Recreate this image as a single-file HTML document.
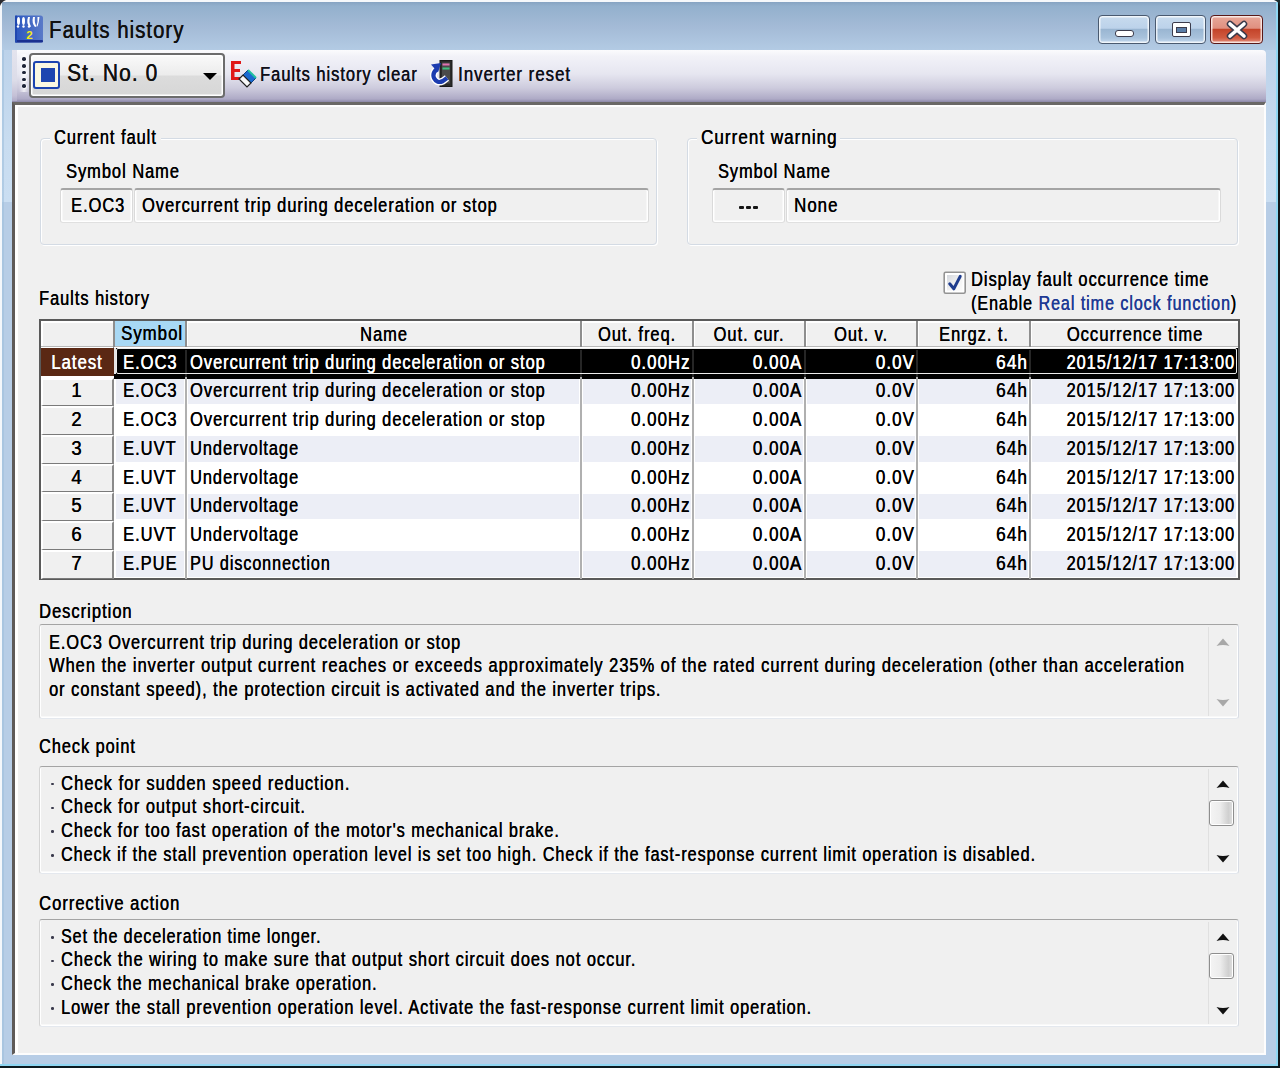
<!DOCTYPE html>
<html><head><meta charset="utf-8"><title>Faults history</title>
<style>
html,body{margin:0;padding:0;}
body{width:1280px;height:1068px;position:relative;overflow:hidden;font-family:"Liberation Sans",sans-serif;background:#b7cde6;}
.r{position:absolute;}
.t{position:absolute;white-space:pre;font-family:"Liberation Sans",sans-serif;-webkit-text-stroke:0.15px currentColor;text-shadow:0.3px 0 0 currentColor;}
</style></head><body>
<div class="r" style="left:0px;top:0px;width:1280px;height:1068px;background:#b7cde6;"></div>
<div class="r" style="left:0px;top:0px;width:1280px;height:2px;background:#f6f8fb;"></div>
<div class="r" style="left:0px;top:2px;width:1280px;height:48px;background:linear-gradient(#86a3c2 0px,#93b0cd 4px,#a3bad6 24px,#b3cbe4 48px);"></div>
<div class="r" style="left:0px;top:0px;width:2px;height:1068px;background:#f4f7fb;"></div>
<div class="r" style="left:2px;top:50px;width:10px;height:152px;background:linear-gradient(#bcd2ea,#c8dcf0 60%,#cadef2);"></div>
<div class="r" style="left:1266px;top:50px;width:10px;height:152px;background:linear-gradient(#bcd2ea,#c8dcf0 60%,#cadef2);"></div>
<div class="r" style="left:2px;top:50px;width:2px;height:1014px;background:rgba(160,192,220,0.6);"></div>
<div class="r" style="left:1276px;top:2px;width:2px;height:1063px;background:#8fd6f2;"></div>
<div class="r" style="left:1278px;top:0px;width:2px;height:1068px;background:#101418;"></div>
<div class="r" style="left:0px;top:1064px;width:1278px;height:1.7px;background:#8fd6f2;"></div>
<div class="r" style="left:0px;top:1065.7px;width:1280px;height:2.3px;background:#0c1a20;"></div>
<svg class="r" style="left:0;top:0" width="7" height="7"><path d="M0 0 H6 Q1.5 1.5 0 6 Z" fill="#2a2a2e"/></svg>
<svg class="r" style="left:1273px;top:0" width="7" height="7"><path d="M7 0 H1 Q5.5 1.5 7 6 Z" fill="#1a2a2e"/></svg>
<svg class="r" style="left:14px;top:14px" width="30" height="30" viewBox="0 0 30 30">
<defs><linearGradient id="ig" x1="0" y1="0" x2="1" y2="0"><stop offset="0" stop-color="#2a56c0"/><stop offset="1" stop-color="#5a7ac8"/></linearGradient></defs>
<rect x="1" y="1.5" width="28" height="27" rx="2.5" fill="url(#ig)"/>
<rect x="1" y="26" width="28" height="2.5" rx="1" fill="#1a3090"/>
<rect x="1" y="1.5" width="2" height="27" fill="#2048b0"/>
<g fill="#fff">
<ellipse cx="4.5" cy="7" rx="1.5" ry="4"/><circle cx="4" cy="12.5" r="1.2"/>
<ellipse cx="9.5" cy="7" rx="1.5" ry="4"/><circle cx="9.5" cy="12.5" r="1.2"/>
<circle cx="15" cy="12.5" r="1.2"/>
<path d="M14 3 Q12 9 15.5 13 L17 12.5 Q14.5 8 16 3 Z"/>
<path d="M19 3 Q17.5 9 21 13 L22.5 12.5 Q20 8 21 3 Z"/>
<path d="M23.5 3 L25.5 3 Q25 9 23.5 12.5 L22.5 12 Q24 8 23.5 3 Z"/>
</g>
<text x="15.5" y="25" font-family="Liberation Sans" font-weight="bold" font-size="11.5" fill="#f4e818" text-anchor="middle">2</text>
</svg>
<div class="t" style="left:48.80px;top:17.62px;font-size:23.004px;line-height:24px;color:#101010;letter-spacing:1.2px;transform:scaleX(0.8813);transform-origin:left;">Faults history</div>
<div class="r" style="left:1098px;top:15px;width:52px;height:29px;box-sizing:border-box;border:1.5px solid #4a5a70;border-radius:4px;background:linear-gradient(#c8dbee 0%,#bcd2ea 45%,#9ab6d2 50%,#a8c2dc 80%,#c4d8ee 100%);box-shadow:inset 0 0 0 1.5px rgba(255,255,255,0.75);"></div>
<div class="r" style="left:1155px;top:15px;width:51px;height:29px;box-sizing:border-box;border:1.5px solid #4a5a70;border-radius:4px;background:linear-gradient(#c8dbee 0%,#bcd2ea 45%,#9ab6d2 50%,#a8c2dc 80%,#c4d8ee 100%);box-shadow:inset 0 0 0 1.5px rgba(255,255,255,0.75);"></div>
<div class="r" style="left:1210px;top:15px;width:53px;height:29px;box-sizing:border-box;border:1.5px solid #5a1818;border-radius:4px;background:linear-gradient(#e8a89a 0%,#e09080 45%,#c4442a 50%,#d05a40 80%,#e49080 100%);box-shadow:inset 0 0 0 1.5px rgba(255,255,255,0.75);"></div>
<div class="r" style="left:1115px;top:29.5px;width:19px;height:7.5px;box-sizing:border-box;border:1.5px solid #3c3c4c;border-radius:3px;background:#fff;"></div>
<div class="r" style="left:1171.5px;top:22px;width:19px;height:15px;box-sizing:border-box;border:1.5px solid #3c3c4c;border-radius:2px;background:#fff;"></div>
<div class="r" style="left:1175.5px;top:26.5px;width:11px;height:6px;box-sizing:border-box;border:1.5px solid #3c3c4c;background:#5a7ea8;"></div>
<svg class="r" style="left:1225px;top:20px" width="24" height="20" viewBox="0 0 24 20">
<path d="M5 4 L19 16 M19 4 L5 16" stroke="#3a3a4a" stroke-width="6.5" stroke-linecap="round"/>
<path d="M5 4 L19 16 M19 4 L5 16" stroke="#fff" stroke-width="3.6" stroke-linecap="round"/>
</svg>
<div class="r" style="left:12px;top:49.6px;width:1254px;height:52.4px;background:linear-gradient(#fbfbfd 0px,#f2f2f8 6px,#e6e6f0 24px,#cdcbdd 38px,#aeaac6 49px,#8c88a8 52px);border-top-right-radius:4px;"></div>
<div class="r" style="left:12px;top:50px;width:5px;height:51px;background:linear-gradient(#e4e4ee,#dcdce8 60%,#c4c0d6 90%,#b0acc8);"></div>
<div class="r" style="left:19px;top:54px;width:10px;height:38px;background:linear-gradient(90deg,rgba(255,255,255,0) 0%,rgba(255,255,255,0.7) 50%,rgba(255,255,255,0) 100%);"></div>
<div class="r" style="left:22px;top:57.4px;width:3.6px;height:3.6px;background:#1e2438;border-radius:50%;box-shadow:0.8px 0.8px 0 #fff;"></div>
<div class="r" style="left:22px;top:64.1px;width:3.6px;height:3.6px;background:#1e2438;border-radius:50%;box-shadow:0.8px 0.8px 0 #fff;"></div>
<div class="r" style="left:22px;top:70.8px;width:3.6px;height:3.6px;background:#1e2438;border-radius:50%;box-shadow:0.8px 0.8px 0 #fff;"></div>
<div class="r" style="left:22px;top:77.5px;width:3.6px;height:3.6px;background:#1e2438;border-radius:50%;box-shadow:0.8px 0.8px 0 #fff;"></div>
<div class="r" style="left:22px;top:84.2px;width:3.6px;height:3.6px;background:#1e2438;border-radius:50%;box-shadow:0.8px 0.8px 0 #fff;"></div>
<div class="r" style="left:29px;top:52.5px;width:196px;height:45px;box-sizing:border-box;border:2px solid #6c6c6c;border-radius:4px;background:linear-gradient(#fafafa 0%,#ececec 48%,#dcdcdc 52%,#d6d6d6 100%);box-shadow:inset 0 0 0 1.5px #fff;"></div>
<div class="r" style="left:33px;top:60.5px;width:27px;height:28px;box-sizing:border-box;border:2px solid #1c44b0;border-radius:3px;background:#fbf8e2;"></div>
<div class="r" style="left:40.5px;top:67.5px;width:14px;height:14px;background:#1e46b0;"></div>
<div class="t" style="left:66.80px;top:61.11px;font-size:23.328px;line-height:24px;color:#101010;letter-spacing:1.2px;transform:scaleX(0.9000);transform-origin:left;">St. No. 0</div>
<svg class="r" style="left:202px;top:72px" width="16" height="9"><path d="M1 1 L15 1 L8 8 Z" fill="#000"/></svg>
<svg class="r" style="left:229px;top:60px" width="30" height="28" viewBox="0 0 30 28">
<path d="M2 1 H12 V4 H5.5 V9 H11 V12 H5.5 V17 H12 V20 H2 Z" fill="#e01818"/>
<path d="M10 19 L19 10 L27 18 L18 27 Z" fill="#1a6ad0" stroke="#104080" stroke-width="1"/>
<path d="M10 19 L14 15 L22 23 L18 27 Z" fill="#f8f8f8" stroke="#202020" stroke-width="1.2"/>
<path d="M19 10 L27 18" stroke="#20c0a0" stroke-width="2"/>
</svg>
<div class="t" style="left:259.50px;top:61.87px;font-size:19.980px;line-height:24px;color:#10101a;letter-spacing:1.2px;transform:scaleX(0.8232);transform-origin:left;">Faults history clear</div>
<svg class="r" style="left:430px;top:60px" width="24" height="28" viewBox="0 0 24 28">
<rect x="10" y="0.5" width="12" height="26" fill="#2a2a2a" stroke="#1a1a1a"/>
<rect x="12" y="2.5" width="8" height="21" fill="#4a4a4a"/>
<rect x="12.5" y="3.5" width="7" height="2" fill="#e070b0"/>
<rect x="12.5" y="7.5" width="7" height="2" fill="#40c080"/>
<path d="M7 9 Q2 13 4 18 Q7 24 13 21 L17 18" stroke="#fff" stroke-width="7" fill="none"/>
<path d="M7 9 Q2 13 4 18 Q7 24 13 21 L17 18" stroke="#1c3cb0" stroke-width="4.2" fill="none"/>
<path d="M1 4.5 L11 3 L8 12.5 Z" fill="#1c3cb0"/>
</svg>
<div class="t" style="left:457.50px;top:62.27px;font-size:19.980px;line-height:24px;color:#10101a;letter-spacing:1.2px;transform:scaleX(0.8403);transform-origin:left;">Inverter reset</div>
<div class="r" style="left:12px;top:102px;width:1254px;height:953px;box-sizing:border-box;background:#f0f0f0;border-top:3px solid #6a6866;border-left:3px solid #5e5a58;border-right:2px solid #fdfdfd;border-bottom:2px solid #fdfdfd;"></div>
<div class="r" style="left:15px;top:105px;width:1249px;height:2px;background:#fff;"></div>
<div class="r" style="left:15px;top:105px;width:3px;height:948px;background:#fff;"></div>
<div class="r" style="left:40px;top:138px;width:617px;height:107px;box-sizing:border-box;border:1.5px solid #d4dbe4;border-radius:4px;box-shadow:1px 1px 0 #fff, inset 1px 1px 0 #fff;"></div>
<div class="r" style="left:50px;top:136px;width:111px;height:6px;background:#f0f0f0;"></div>
<div class="t" style="left:54.00px;top:125.07px;font-size:19.980px;line-height:24px;color:#000;letter-spacing:1.2px;transform:scaleX(0.8187);transform-origin:left;">Current fault</div>
<div class="t" style="left:65.50px;top:158.67px;font-size:19.980px;line-height:24px;color:#000;letter-spacing:1.2px;transform:scaleX(0.8214);transform-origin:left;">Symbol Name</div>
<div class="r" style="left:60px;top:188px;width:73px;height:35px;box-sizing:border-box;border-top:2px solid #a4a4a4;border-left:1px solid #dadada;border-right:1px solid #dadada;border-bottom:1px solid #e0e0e0;border-radius:3px;background:#f0f0f0;box-shadow:inset 1.5px 0 0 #fff, inset -1.5px 0 0 #fff, inset 0 -1.5px 0 #fff;"></div>
<div class="r" style="left:134px;top:188px;width:515px;height:35px;box-sizing:border-box;border-top:2px solid #a4a4a4;border-left:1px solid #dadada;border-right:1px solid #dadada;border-bottom:1px solid #e0e0e0;border-radius:3px;background:#f0f0f0;box-shadow:inset 1.5px 0 0 #fff, inset -1.5px 0 0 #fff, inset 0 -1.5px 0 #fff;"></div>
<div class="t" style="left:70.50px;top:193.07px;font-size:19.980px;line-height:24px;color:#000;letter-spacing:1.2px;transform:scaleX(0.8213);transform-origin:left;">E.OC3</div>
<div class="t" style="left:141.80px;top:193.07px;font-size:19.980px;line-height:24px;color:#000;letter-spacing:1.2px;transform:scaleX(0.8203);transform-origin:left;">Overcurrent trip during deceleration or stop</div>
<div class="r" style="left:687px;top:138px;width:551px;height:107px;box-sizing:border-box;border:1.5px solid #d4dbe4;border-radius:4px;box-shadow:1px 1px 0 #fff, inset 1px 1px 0 #fff;"></div>
<div class="r" style="left:697px;top:136px;width:143px;height:6px;background:#f0f0f0;"></div>
<div class="t" style="left:700.50px;top:125.07px;font-size:19.980px;line-height:24px;color:#000;letter-spacing:1.2px;transform:scaleX(0.8529);transform-origin:left;">Current warning</div>
<div class="t" style="left:718.00px;top:158.67px;font-size:19.980px;line-height:24px;color:#000;letter-spacing:1.2px;transform:scaleX(0.8138);transform-origin:left;">Symbol Name</div>
<div class="r" style="left:712px;top:188px;width:73px;height:35px;box-sizing:border-box;border-top:2px solid #a4a4a4;border-left:1px solid #dadada;border-right:1px solid #dadada;border-bottom:1px solid #e0e0e0;border-radius:3px;background:#f0f0f0;box-shadow:inset 1.5px 0 0 #fff, inset -1.5px 0 0 #fff, inset 0 -1.5px 0 #fff;"></div>
<div class="r" style="left:786px;top:188px;width:435px;height:35px;box-sizing:border-box;border-top:2px solid #a4a4a4;border-left:1px solid #dadada;border-right:1px solid #dadada;border-bottom:1px solid #e0e0e0;border-radius:3px;background:#f0f0f0;box-shadow:inset 1.5px 0 0 #fff, inset -1.5px 0 0 #fff, inset 0 -1.5px 0 #fff;"></div>
<div class="r" style="left:738.5px;top:206.3px;width:5.6px;height:2.5px;background:#151515;border-radius:1px;"></div>
<div class="r" style="left:745.7px;top:206.3px;width:5.6px;height:2.5px;background:#151515;border-radius:1px;"></div>
<div class="r" style="left:752.9px;top:206.3px;width:5.6px;height:2.5px;background:#151515;border-radius:1px;"></div>
<div class="t" style="left:793.50px;top:193.07px;font-size:19.980px;line-height:24px;color:#000;letter-spacing:1.2px;transform:scaleX(0.8438);transform-origin:left;">None</div>
<div class="t" style="left:38.50px;top:286.27px;font-size:19.980px;line-height:24px;color:#000;letter-spacing:1.2px;transform:scaleX(0.8184);transform-origin:left;">Faults history</div>
<svg class="r" style="left:943px;top:271px" width="24" height="24" viewBox="0 0 24 24">
<defs><linearGradient id="cbg" x1="0" y1="0" x2="1" y2="1"><stop offset="0" stop-color="#d4d8de"/><stop offset="0.6" stop-color="#f4f4f4"/><stop offset="1" stop-color="#fafafa"/></linearGradient></defs>
<rect x="1.2" y="1.2" width="21" height="21" rx="1.5" fill="#fff" stroke="#939393" stroke-width="1.6"/>
<rect x="4" y="4" width="15.5" height="15.5" fill="url(#cbg)"/>
<path d="M6.7 12.8 L10.8 17.8 L17.2 5.4" stroke="#1e3c8e" stroke-width="3" fill="none" stroke-linecap="round" stroke-linejoin="round"/>
</svg>
<div class="t" style="left:970.50px;top:267.37px;font-size:19.980px;line-height:24px;color:#000;letter-spacing:1.2px;transform:scaleX(0.8186);transform-origin:left;">Display fault occurrence time</div>
<div class="t" style="left:970.50px;top:291.07px;font-size:19.980px;line-height:24px;color:#000;letter-spacing:1.2px;transform:scaleX(0.8028);transform-origin:left;">(Enable <span style="color:#1f3a94">Real time clock function</span>)</div>
<div class="r" style="left:39px;top:319px;width:1201px;height:261px;box-sizing:border-box;border:2px solid #5a5a5a;background:#fff;"></div>
<div class="r" style="left:41px;top:321px;width:1197px;height:28px;background:#f0f0f0;"></div>
<div class="r" style="left:41px;top:321px;width:1197px;height:1.5px;background:#fff;"></div>
<div class="r" style="left:41px;top:345.5px;width:1197px;height:1.5px;background:#b8b8b8;"></div>
<div class="r" style="left:41px;top:347px;width:1197px;height:1.8px;background:#fff;"></div>
<div class="r" style="left:115px;top:321.3px;width:70.2px;height:25px;background:#a8d8f4;"></div>
<div class="r" style="left:41px;top:321px;width:1.5px;height:25px;background:#fff;"></div>
<div class="r" style="left:112.8px;top:321px;width:1.8px;height:27.8px;background:#8e8e8e;"></div>
<div class="r" style="left:184.8px;top:321px;width:1.8px;height:27.8px;background:#8e8e8e;"></div>
<div class="r" style="left:186.8px;top:322.5px;width:1.4px;height:23px;background:#fff;"></div>
<div class="r" style="left:579.8px;top:321px;width:1.8px;height:27.8px;background:#8e8e8e;"></div>
<div class="r" style="left:581.8px;top:322.5px;width:1.4px;height:23px;background:#fff;"></div>
<div class="r" style="left:691.8px;top:321px;width:1.8px;height:27.8px;background:#8e8e8e;"></div>
<div class="r" style="left:693.8px;top:322.5px;width:1.4px;height:23px;background:#fff;"></div>
<div class="r" style="left:803.8px;top:321px;width:1.8px;height:27.8px;background:#8e8e8e;"></div>
<div class="r" style="left:805.8px;top:322.5px;width:1.4px;height:23px;background:#fff;"></div>
<div class="r" style="left:915.8px;top:321px;width:1.8px;height:27.8px;background:#8e8e8e;"></div>
<div class="r" style="left:917.8px;top:322.5px;width:1.4px;height:23px;background:#fff;"></div>
<div class="r" style="left:1028.8px;top:321px;width:1.8px;height:27.8px;background:#8e8e8e;"></div>
<div class="r" style="left:1030.8px;top:322.5px;width:1.4px;height:23px;background:#fff;"></div>
<div class="t" style="left:120.80px;top:320.67px;font-size:19.980px;line-height:24px;color:#000;letter-spacing:1.2px;transform:scaleX(0.8409);transform-origin:left;">Symbol</div>
<div class="t" style="left:183.99px;width:400px;text-align:center;top:322.47px;font-size:19.980px;line-height:24px;color:#000;letter-spacing:1.2px;transform:scaleX(0.8240);transform-origin:center;">Name</div>
<div class="t" style="left:437.49px;width:400px;text-align:center;top:322.47px;font-size:19.980px;line-height:24px;color:#000;letter-spacing:1.2px;transform:scaleX(0.8196);transform-origin:center;">Out. freq.</div>
<div class="t" style="left:549.49px;width:400px;text-align:center;top:322.47px;font-size:19.980px;line-height:24px;color:#000;letter-spacing:1.2px;transform:scaleX(0.8213);transform-origin:center;">Out. cur.</div>
<div class="t" style="left:661.49px;width:400px;text-align:center;top:322.47px;font-size:19.980px;line-height:24px;color:#000;letter-spacing:1.2px;transform:scaleX(0.8228);transform-origin:center;">Out. v.</div>
<div class="t" style="left:773.99px;width:400px;text-align:center;top:322.47px;font-size:19.980px;line-height:24px;color:#000;letter-spacing:1.2px;transform:scaleX(0.8199);transform-origin:center;">Enrgz. t.</div>
<div class="t" style="left:934.50px;width:400px;text-align:center;top:322.47px;font-size:19.980px;line-height:24px;color:#000;letter-spacing:1.2px;transform:scaleX(0.8307);transform-origin:center;">Occurrence time</div>
<div class="r" style="left:114px;top:347px;width:1124px;height:231px;background:#fff;"></div>
<div class="r" style="left:41px;top:348px;width:73px;height:27.72px;background:#5a2814;"></div>
<div class="r" style="left:114px;top:348.3px;width:1124px;height:30.22px;background:#000;"></div>
<div class="r" style="left:114px;top:348.3px;width:1.6px;height:25.42px;background:#e4e4e4;"></div>
<div class="r" style="left:184.8px;top:350px;width:2px;height:28.52px;background:#262626;"></div>
<div class="r" style="left:579.8px;top:350px;width:2px;height:28.52px;background:#262626;"></div>
<div class="r" style="left:691.8px;top:350px;width:2px;height:28.52px;background:#262626;"></div>
<div class="r" style="left:803.8px;top:350px;width:2px;height:28.52px;background:#262626;"></div>
<div class="r" style="left:915.8px;top:350px;width:2px;height:28.52px;background:#262626;"></div>
<div class="r" style="left:1028.8px;top:350px;width:2px;height:28.52px;background:#262626;"></div>
<div class="r" style="left:115.6px;top:348.3px;width:1121.6px;height:25.62px;box-sizing:border-box;border:1.5px solid #ececec;border-radius:2px;"></div>
<div class="t" style="left:-123.50px;width:400px;text-align:center;top:349.77px;font-size:19.980px;line-height:24px;color:#fff;letter-spacing:1.2px;transform:scaleX(0.8339);transform-origin:center;-webkit-text-stroke:0.2px #fff;">Latest</div>
<div class="t" style="left:122.50px;top:349.77px;font-size:19.980px;line-height:24px;color:#fff;letter-spacing:1.2px;transform:scaleX(0.8273);transform-origin:left;-webkit-text-stroke:0.2px #fff;">E.OC3</div>
<div class="t" style="left:189.80px;top:349.77px;font-size:19.980px;line-height:24px;color:#fff;letter-spacing:1.2px;transform:scaleX(0.8203);transform-origin:left;-webkit-text-stroke:0.2px #fff;">Overcurrent trip during deceleration or stop</div>
<div class="t" style="right:589.49px;top:349.77px;font-size:19.980px;line-height:24px;color:#fff;letter-spacing:1.2px;transform:scaleX(0.8457);transform-origin:right;-webkit-text-stroke:0.2px #fff;">0.00Hz</div>
<div class="t" style="right:477.48px;top:349.77px;font-size:19.980px;line-height:24px;color:#fff;letter-spacing:1.2px;transform:scaleX(0.8479);transform-origin:right;-webkit-text-stroke:0.2px #fff;">0.00A</div>
<div class="t" style="right:365.48px;top:349.77px;font-size:19.980px;line-height:24px;color:#fff;letter-spacing:1.2px;transform:scaleX(0.8514);transform-origin:right;-webkit-text-stroke:0.2px #fff;">0.0V</div>
<div class="t" style="right:252.46px;top:349.77px;font-size:19.980px;line-height:24px;color:#fff;letter-spacing:1.2px;transform:scaleX(0.8639);transform-origin:right;-webkit-text-stroke:0.2px #fff;">64h</div>
<div class="t" style="right:44.52px;top:349.77px;font-size:19.980px;line-height:24px;color:#fff;letter-spacing:1.2px;transform:scaleX(0.8184);transform-origin:right;-webkit-text-stroke:0.2px #fff;">2015/12/17 17:13:00</div>
<div class="r" style="left:41px;top:377.52px;width:73px;height:28.72px;box-sizing:border-box;background:#f0f0f0;border-top:2px solid #fff;border-left:2px solid #fff;border-right:2.5px solid #8a8a8a;border-bottom:1.8px solid #7a7a7a;"></div>
<div class="r" style="left:116px;top:378.72px;width:68px;height:25.72px;background:#eceef6;"></div>
<div class="r" style="left:188px;top:378.72px;width:391px;height:25.72px;background:#eceef6;"></div>
<div class="r" style="left:583px;top:378.72px;width:108px;height:25.72px;background:#eceef6;"></div>
<div class="r" style="left:695px;top:378.72px;width:108px;height:25.72px;background:#eceef6;"></div>
<div class="r" style="left:807px;top:378.72px;width:108px;height:25.72px;background:#eceef6;"></div>
<div class="r" style="left:919px;top:378.72px;width:109px;height:25.72px;background:#eceef6;"></div>
<div class="r" style="left:1032px;top:378.72px;width:204px;height:25.72px;background:#eceef6;"></div>
<div class="r" style="left:185px;top:376.72px;width:1.5px;height:29.72px;background:#b0b0b0;"></div>
<div class="r" style="left:580px;top:376.72px;width:1.5px;height:29.72px;background:#b0b0b0;"></div>
<div class="r" style="left:692px;top:376.72px;width:1.5px;height:29.72px;background:#b0b0b0;"></div>
<div class="r" style="left:804px;top:376.72px;width:1.5px;height:29.72px;background:#b0b0b0;"></div>
<div class="r" style="left:916px;top:376.72px;width:1.5px;height:29.72px;background:#b0b0b0;"></div>
<div class="r" style="left:1029px;top:376.72px;width:1.5px;height:29.72px;background:#b0b0b0;"></div>
<div class="t" style="left:-123.44px;width:400px;text-align:center;top:378.49px;font-size:19.980px;line-height:24px;color:#000;letter-spacing:1.2px;transform:scaleX(0.9257);transform-origin:center;">1</div>
<div class="t" style="left:122.50px;top:378.49px;font-size:19.980px;line-height:24px;color:#000;letter-spacing:1.2px;transform:scaleX(0.8273);transform-origin:left;">E.OC3</div>
<div class="t" style="left:189.80px;top:378.49px;font-size:19.980px;line-height:24px;color:#000;letter-spacing:1.2px;transform:scaleX(0.8203);transform-origin:left;">Overcurrent trip during deceleration or stop</div>
<div class="t" style="right:589.49px;top:378.49px;font-size:19.980px;line-height:24px;color:#000;letter-spacing:1.2px;transform:scaleX(0.8457);transform-origin:right;">0.00Hz</div>
<div class="t" style="right:477.48px;top:378.49px;font-size:19.980px;line-height:24px;color:#000;letter-spacing:1.2px;transform:scaleX(0.8479);transform-origin:right;">0.00A</div>
<div class="t" style="right:365.48px;top:378.49px;font-size:19.980px;line-height:24px;color:#000;letter-spacing:1.2px;transform:scaleX(0.8514);transform-origin:right;">0.0V</div>
<div class="t" style="right:252.46px;top:378.49px;font-size:19.980px;line-height:24px;color:#000;letter-spacing:1.2px;transform:scaleX(0.8639);transform-origin:right;">64h</div>
<div class="t" style="right:44.52px;top:378.49px;font-size:19.980px;line-height:24px;color:#000;letter-spacing:1.2px;transform:scaleX(0.8184);transform-origin:right;">2015/12/17 17:13:00</div>
<div class="r" style="left:41px;top:406.24px;width:73px;height:28.72px;box-sizing:border-box;background:#f0f0f0;border-top:2px solid #fff;border-left:2px solid #fff;border-right:2.5px solid #8a8a8a;border-bottom:1.8px solid #7a7a7a;"></div>
<div class="r" style="left:185px;top:405.44px;width:1.5px;height:29.72px;background:#b0b0b0;"></div>
<div class="r" style="left:580px;top:405.44px;width:1.5px;height:29.72px;background:#b0b0b0;"></div>
<div class="r" style="left:692px;top:405.44px;width:1.5px;height:29.72px;background:#b0b0b0;"></div>
<div class="r" style="left:804px;top:405.44px;width:1.5px;height:29.72px;background:#b0b0b0;"></div>
<div class="r" style="left:916px;top:405.44px;width:1.5px;height:29.72px;background:#b0b0b0;"></div>
<div class="r" style="left:1029px;top:405.44px;width:1.5px;height:29.72px;background:#b0b0b0;"></div>
<div class="t" style="left:-123.44px;width:400px;text-align:center;top:407.21px;font-size:19.980px;line-height:24px;color:#000;letter-spacing:1.2px;transform:scaleX(0.9257);transform-origin:center;">2</div>
<div class="t" style="left:122.50px;top:407.21px;font-size:19.980px;line-height:24px;color:#000;letter-spacing:1.2px;transform:scaleX(0.8273);transform-origin:left;">E.OC3</div>
<div class="t" style="left:189.80px;top:407.21px;font-size:19.980px;line-height:24px;color:#000;letter-spacing:1.2px;transform:scaleX(0.8203);transform-origin:left;">Overcurrent trip during deceleration or stop</div>
<div class="t" style="right:589.49px;top:407.21px;font-size:19.980px;line-height:24px;color:#000;letter-spacing:1.2px;transform:scaleX(0.8457);transform-origin:right;">0.00Hz</div>
<div class="t" style="right:477.48px;top:407.21px;font-size:19.980px;line-height:24px;color:#000;letter-spacing:1.2px;transform:scaleX(0.8479);transform-origin:right;">0.00A</div>
<div class="t" style="right:365.48px;top:407.21px;font-size:19.980px;line-height:24px;color:#000;letter-spacing:1.2px;transform:scaleX(0.8514);transform-origin:right;">0.0V</div>
<div class="t" style="right:252.46px;top:407.21px;font-size:19.980px;line-height:24px;color:#000;letter-spacing:1.2px;transform:scaleX(0.8639);transform-origin:right;">64h</div>
<div class="t" style="right:44.52px;top:407.21px;font-size:19.980px;line-height:24px;color:#000;letter-spacing:1.2px;transform:scaleX(0.8184);transform-origin:right;">2015/12/17 17:13:00</div>
<div class="r" style="left:41px;top:434.96px;width:73px;height:28.72px;box-sizing:border-box;background:#f0f0f0;border-top:2px solid #fff;border-left:2px solid #fff;border-right:2.5px solid #8a8a8a;border-bottom:1.8px solid #7a7a7a;"></div>
<div class="r" style="left:116px;top:436.16px;width:68px;height:25.72px;background:#eceef6;"></div>
<div class="r" style="left:188px;top:436.16px;width:391px;height:25.72px;background:#eceef6;"></div>
<div class="r" style="left:583px;top:436.16px;width:108px;height:25.72px;background:#eceef6;"></div>
<div class="r" style="left:695px;top:436.16px;width:108px;height:25.72px;background:#eceef6;"></div>
<div class="r" style="left:807px;top:436.16px;width:108px;height:25.72px;background:#eceef6;"></div>
<div class="r" style="left:919px;top:436.16px;width:109px;height:25.72px;background:#eceef6;"></div>
<div class="r" style="left:1032px;top:436.16px;width:204px;height:25.72px;background:#eceef6;"></div>
<div class="r" style="left:185px;top:434.16px;width:1.5px;height:29.72px;background:#b0b0b0;"></div>
<div class="r" style="left:580px;top:434.16px;width:1.5px;height:29.72px;background:#b0b0b0;"></div>
<div class="r" style="left:692px;top:434.16px;width:1.5px;height:29.72px;background:#b0b0b0;"></div>
<div class="r" style="left:804px;top:434.16px;width:1.5px;height:29.72px;background:#b0b0b0;"></div>
<div class="r" style="left:916px;top:434.16px;width:1.5px;height:29.72px;background:#b0b0b0;"></div>
<div class="r" style="left:1029px;top:434.16px;width:1.5px;height:29.72px;background:#b0b0b0;"></div>
<div class="t" style="left:-123.44px;width:400px;text-align:center;top:435.93px;font-size:19.980px;line-height:24px;color:#000;letter-spacing:1.2px;transform:scaleX(0.9257);transform-origin:center;">3</div>
<div class="t" style="left:122.50px;top:435.93px;font-size:19.980px;line-height:24px;color:#000;letter-spacing:1.2px;transform:scaleX(0.8261);transform-origin:left;">E.UVT</div>
<div class="t" style="left:189.80px;top:435.93px;font-size:19.980px;line-height:24px;color:#000;letter-spacing:1.2px;transform:scaleX(0.8183);transform-origin:left;">Undervoltage</div>
<div class="t" style="right:589.49px;top:435.93px;font-size:19.980px;line-height:24px;color:#000;letter-spacing:1.2px;transform:scaleX(0.8457);transform-origin:right;">0.00Hz</div>
<div class="t" style="right:477.48px;top:435.93px;font-size:19.980px;line-height:24px;color:#000;letter-spacing:1.2px;transform:scaleX(0.8479);transform-origin:right;">0.00A</div>
<div class="t" style="right:365.48px;top:435.93px;font-size:19.980px;line-height:24px;color:#000;letter-spacing:1.2px;transform:scaleX(0.8514);transform-origin:right;">0.0V</div>
<div class="t" style="right:252.46px;top:435.93px;font-size:19.980px;line-height:24px;color:#000;letter-spacing:1.2px;transform:scaleX(0.8639);transform-origin:right;">64h</div>
<div class="t" style="right:44.52px;top:435.93px;font-size:19.980px;line-height:24px;color:#000;letter-spacing:1.2px;transform:scaleX(0.8184);transform-origin:right;">2015/12/17 17:13:00</div>
<div class="r" style="left:41px;top:463.68px;width:73px;height:28.72px;box-sizing:border-box;background:#f0f0f0;border-top:2px solid #fff;border-left:2px solid #fff;border-right:2.5px solid #8a8a8a;border-bottom:1.8px solid #7a7a7a;"></div>
<div class="r" style="left:185px;top:462.88px;width:1.5px;height:29.72px;background:#b0b0b0;"></div>
<div class="r" style="left:580px;top:462.88px;width:1.5px;height:29.72px;background:#b0b0b0;"></div>
<div class="r" style="left:692px;top:462.88px;width:1.5px;height:29.72px;background:#b0b0b0;"></div>
<div class="r" style="left:804px;top:462.88px;width:1.5px;height:29.72px;background:#b0b0b0;"></div>
<div class="r" style="left:916px;top:462.88px;width:1.5px;height:29.72px;background:#b0b0b0;"></div>
<div class="r" style="left:1029px;top:462.88px;width:1.5px;height:29.72px;background:#b0b0b0;"></div>
<div class="t" style="left:-123.44px;width:400px;text-align:center;top:464.65px;font-size:19.980px;line-height:24px;color:#000;letter-spacing:1.2px;transform:scaleX(0.9257);transform-origin:center;">4</div>
<div class="t" style="left:122.50px;top:464.65px;font-size:19.980px;line-height:24px;color:#000;letter-spacing:1.2px;transform:scaleX(0.8261);transform-origin:left;">E.UVT</div>
<div class="t" style="left:189.80px;top:464.65px;font-size:19.980px;line-height:24px;color:#000;letter-spacing:1.2px;transform:scaleX(0.8183);transform-origin:left;">Undervoltage</div>
<div class="t" style="right:589.49px;top:464.65px;font-size:19.980px;line-height:24px;color:#000;letter-spacing:1.2px;transform:scaleX(0.8457);transform-origin:right;">0.00Hz</div>
<div class="t" style="right:477.48px;top:464.65px;font-size:19.980px;line-height:24px;color:#000;letter-spacing:1.2px;transform:scaleX(0.8479);transform-origin:right;">0.00A</div>
<div class="t" style="right:365.48px;top:464.65px;font-size:19.980px;line-height:24px;color:#000;letter-spacing:1.2px;transform:scaleX(0.8514);transform-origin:right;">0.0V</div>
<div class="t" style="right:252.46px;top:464.65px;font-size:19.980px;line-height:24px;color:#000;letter-spacing:1.2px;transform:scaleX(0.8639);transform-origin:right;">64h</div>
<div class="t" style="right:44.52px;top:464.65px;font-size:19.980px;line-height:24px;color:#000;letter-spacing:1.2px;transform:scaleX(0.8184);transform-origin:right;">2015/12/17 17:13:00</div>
<div class="r" style="left:41px;top:492.4px;width:73px;height:28.72px;box-sizing:border-box;background:#f0f0f0;border-top:2px solid #fff;border-left:2px solid #fff;border-right:2.5px solid #8a8a8a;border-bottom:1.8px solid #7a7a7a;"></div>
<div class="r" style="left:116px;top:493.6px;width:68px;height:25.72px;background:#eceef6;"></div>
<div class="r" style="left:188px;top:493.6px;width:391px;height:25.72px;background:#eceef6;"></div>
<div class="r" style="left:583px;top:493.6px;width:108px;height:25.72px;background:#eceef6;"></div>
<div class="r" style="left:695px;top:493.6px;width:108px;height:25.72px;background:#eceef6;"></div>
<div class="r" style="left:807px;top:493.6px;width:108px;height:25.72px;background:#eceef6;"></div>
<div class="r" style="left:919px;top:493.6px;width:109px;height:25.72px;background:#eceef6;"></div>
<div class="r" style="left:1032px;top:493.6px;width:204px;height:25.72px;background:#eceef6;"></div>
<div class="r" style="left:185px;top:491.6px;width:1.5px;height:29.72px;background:#b0b0b0;"></div>
<div class="r" style="left:580px;top:491.6px;width:1.5px;height:29.72px;background:#b0b0b0;"></div>
<div class="r" style="left:692px;top:491.6px;width:1.5px;height:29.72px;background:#b0b0b0;"></div>
<div class="r" style="left:804px;top:491.6px;width:1.5px;height:29.72px;background:#b0b0b0;"></div>
<div class="r" style="left:916px;top:491.6px;width:1.5px;height:29.72px;background:#b0b0b0;"></div>
<div class="r" style="left:1029px;top:491.6px;width:1.5px;height:29.72px;background:#b0b0b0;"></div>
<div class="t" style="left:-123.44px;width:400px;text-align:center;top:493.37px;font-size:19.980px;line-height:24px;color:#000;letter-spacing:1.2px;transform:scaleX(0.9257);transform-origin:center;">5</div>
<div class="t" style="left:122.50px;top:493.37px;font-size:19.980px;line-height:24px;color:#000;letter-spacing:1.2px;transform:scaleX(0.8261);transform-origin:left;">E.UVT</div>
<div class="t" style="left:189.80px;top:493.37px;font-size:19.980px;line-height:24px;color:#000;letter-spacing:1.2px;transform:scaleX(0.8183);transform-origin:left;">Undervoltage</div>
<div class="t" style="right:589.49px;top:493.37px;font-size:19.980px;line-height:24px;color:#000;letter-spacing:1.2px;transform:scaleX(0.8457);transform-origin:right;">0.00Hz</div>
<div class="t" style="right:477.48px;top:493.37px;font-size:19.980px;line-height:24px;color:#000;letter-spacing:1.2px;transform:scaleX(0.8479);transform-origin:right;">0.00A</div>
<div class="t" style="right:365.48px;top:493.37px;font-size:19.980px;line-height:24px;color:#000;letter-spacing:1.2px;transform:scaleX(0.8514);transform-origin:right;">0.0V</div>
<div class="t" style="right:252.46px;top:493.37px;font-size:19.980px;line-height:24px;color:#000;letter-spacing:1.2px;transform:scaleX(0.8639);transform-origin:right;">64h</div>
<div class="t" style="right:44.52px;top:493.37px;font-size:19.980px;line-height:24px;color:#000;letter-spacing:1.2px;transform:scaleX(0.8184);transform-origin:right;">2015/12/17 17:13:00</div>
<div class="r" style="left:41px;top:521.12px;width:73px;height:28.72px;box-sizing:border-box;background:#f0f0f0;border-top:2px solid #fff;border-left:2px solid #fff;border-right:2.5px solid #8a8a8a;border-bottom:1.8px solid #7a7a7a;"></div>
<div class="r" style="left:185px;top:520.32px;width:1.5px;height:29.72px;background:#b0b0b0;"></div>
<div class="r" style="left:580px;top:520.32px;width:1.5px;height:29.72px;background:#b0b0b0;"></div>
<div class="r" style="left:692px;top:520.32px;width:1.5px;height:29.72px;background:#b0b0b0;"></div>
<div class="r" style="left:804px;top:520.32px;width:1.5px;height:29.72px;background:#b0b0b0;"></div>
<div class="r" style="left:916px;top:520.32px;width:1.5px;height:29.72px;background:#b0b0b0;"></div>
<div class="r" style="left:1029px;top:520.32px;width:1.5px;height:29.72px;background:#b0b0b0;"></div>
<div class="t" style="left:-123.44px;width:400px;text-align:center;top:522.09px;font-size:19.980px;line-height:24px;color:#000;letter-spacing:1.2px;transform:scaleX(0.9257);transform-origin:center;">6</div>
<div class="t" style="left:122.50px;top:522.09px;font-size:19.980px;line-height:24px;color:#000;letter-spacing:1.2px;transform:scaleX(0.8261);transform-origin:left;">E.UVT</div>
<div class="t" style="left:189.80px;top:522.09px;font-size:19.980px;line-height:24px;color:#000;letter-spacing:1.2px;transform:scaleX(0.8183);transform-origin:left;">Undervoltage</div>
<div class="t" style="right:589.49px;top:522.09px;font-size:19.980px;line-height:24px;color:#000;letter-spacing:1.2px;transform:scaleX(0.8457);transform-origin:right;">0.00Hz</div>
<div class="t" style="right:477.48px;top:522.09px;font-size:19.980px;line-height:24px;color:#000;letter-spacing:1.2px;transform:scaleX(0.8479);transform-origin:right;">0.00A</div>
<div class="t" style="right:365.48px;top:522.09px;font-size:19.980px;line-height:24px;color:#000;letter-spacing:1.2px;transform:scaleX(0.8514);transform-origin:right;">0.0V</div>
<div class="t" style="right:252.46px;top:522.09px;font-size:19.980px;line-height:24px;color:#000;letter-spacing:1.2px;transform:scaleX(0.8639);transform-origin:right;">64h</div>
<div class="t" style="right:44.52px;top:522.09px;font-size:19.980px;line-height:24px;color:#000;letter-spacing:1.2px;transform:scaleX(0.8184);transform-origin:right;">2015/12/17 17:13:00</div>
<div class="r" style="left:41px;top:549.84px;width:73px;height:28.72px;box-sizing:border-box;background:#f0f0f0;border-top:2px solid #fff;border-left:2px solid #fff;border-right:2.5px solid #8a8a8a;border-bottom:1.8px solid #7a7a7a;"></div>
<div class="r" style="left:116px;top:551.04px;width:68px;height:25.72px;background:#eceef6;"></div>
<div class="r" style="left:188px;top:551.04px;width:391px;height:25.72px;background:#eceef6;"></div>
<div class="r" style="left:583px;top:551.04px;width:108px;height:25.72px;background:#eceef6;"></div>
<div class="r" style="left:695px;top:551.04px;width:108px;height:25.72px;background:#eceef6;"></div>
<div class="r" style="left:807px;top:551.04px;width:108px;height:25.72px;background:#eceef6;"></div>
<div class="r" style="left:919px;top:551.04px;width:109px;height:25.72px;background:#eceef6;"></div>
<div class="r" style="left:1032px;top:551.04px;width:204px;height:25.72px;background:#eceef6;"></div>
<div class="r" style="left:185px;top:549.04px;width:1.5px;height:29.72px;background:#b0b0b0;"></div>
<div class="r" style="left:580px;top:549.04px;width:1.5px;height:29.72px;background:#b0b0b0;"></div>
<div class="r" style="left:692px;top:549.04px;width:1.5px;height:29.72px;background:#b0b0b0;"></div>
<div class="r" style="left:804px;top:549.04px;width:1.5px;height:29.72px;background:#b0b0b0;"></div>
<div class="r" style="left:916px;top:549.04px;width:1.5px;height:29.72px;background:#b0b0b0;"></div>
<div class="r" style="left:1029px;top:549.04px;width:1.5px;height:29.72px;background:#b0b0b0;"></div>
<div class="t" style="left:-123.44px;width:400px;text-align:center;top:550.81px;font-size:19.980px;line-height:24px;color:#000;letter-spacing:1.2px;transform:scaleX(0.9257);transform-origin:center;">7</div>
<div class="t" style="left:122.50px;top:550.81px;font-size:19.980px;line-height:24px;color:#000;letter-spacing:1.2px;transform:scaleX(0.8273);transform-origin:left;">E.PUE</div>
<div class="t" style="left:189.80px;top:550.81px;font-size:19.980px;line-height:24px;color:#000;letter-spacing:1.2px;transform:scaleX(0.8057);transform-origin:left;">PU disconnection</div>
<div class="t" style="right:589.49px;top:550.81px;font-size:19.980px;line-height:24px;color:#000;letter-spacing:1.2px;transform:scaleX(0.8457);transform-origin:right;">0.00Hz</div>
<div class="t" style="right:477.48px;top:550.81px;font-size:19.980px;line-height:24px;color:#000;letter-spacing:1.2px;transform:scaleX(0.8479);transform-origin:right;">0.00A</div>
<div class="t" style="right:365.48px;top:550.81px;font-size:19.980px;line-height:24px;color:#000;letter-spacing:1.2px;transform:scaleX(0.8514);transform-origin:right;">0.0V</div>
<div class="t" style="right:252.46px;top:550.81px;font-size:19.980px;line-height:24px;color:#000;letter-spacing:1.2px;transform:scaleX(0.8639);transform-origin:right;">64h</div>
<div class="t" style="right:44.52px;top:550.81px;font-size:19.980px;line-height:24px;color:#000;letter-spacing:1.2px;transform:scaleX(0.8184);transform-origin:right;">2015/12/17 17:13:00</div>
<div class="t" style="left:38.50px;top:599.37px;font-size:19.980px;line-height:24px;color:#000;letter-spacing:1.2px;transform:scaleX(0.8266);transform-origin:left;">Description</div>
<div class="r" style="left:39px;top:624px;width:1200px;height:95px;box-sizing:border-box;border-top:1.8px solid #a4a4a4;border-left:1px solid #d4d4d4;border-right:1px solid #d8dce4;border-bottom:1px solid #e4e8ee;border-radius:3px;background:#f0f0f0;box-shadow:inset 1px 0 0 #fff, inset -1px 0 0 #fff, inset 0 -1.5px 0 #fff;"></div>
<div class="r" style="left:1208px;top:627px;width:27px;height:89px;box-sizing:border-box;border-left:1.5px solid #e0e0e0;background:#f0f0f0;"></div>
<svg class="r" style="left:1215px;top:636.8px" width="16" height="10"><path d="M1.5 9 L8 1.5 L14.5 9 Q8 7 1.5 9 Z" fill="#a8a8a8"/></svg>
<svg class="r" style="left:1215px;top:698px" width="16" height="10"><path d="M1.5 1 Q8 3 14.5 1 L8 8.5 Z" fill="#a8a8a8"/></svg>
<div class="t" style="left:48.50px;top:629.57px;font-size:19.980px;line-height:24px;color:#000;letter-spacing:1.2px;transform:scaleX(0.8140);transform-origin:left;">E.OC3 Overcurrent trip during deceleration or stop</div>
<div class="t" style="left:48.50px;top:653.27px;font-size:19.980px;line-height:24px;color:#000;letter-spacing:1.2px;transform:scaleX(0.8226);transform-origin:left;">When the inverter output current reaches or exceeds approximately 235% of the rated current during deceleration (other than acceleration</div>
<div class="t" style="left:48.50px;top:677.07px;font-size:19.980px;line-height:24px;color:#000;letter-spacing:1.2px;transform:scaleX(0.8181);transform-origin:left;">or constant speed), the protection circuit is activated and the inverter trips.</div>
<div class="t" style="left:38.50px;top:734.47px;font-size:19.980px;line-height:24px;color:#000;letter-spacing:1.2px;transform:scaleX(0.8147);transform-origin:left;">Check point</div>
<div class="r" style="left:39px;top:766px;width:1200px;height:108px;box-sizing:border-box;border-top:1.8px solid #a4a4a4;border-left:1px solid #d4d4d4;border-right:1px solid #d8dce4;border-bottom:1px solid #e4e8ee;border-radius:3px;background:#f0f0f0;box-shadow:inset 1px 0 0 #fff, inset -1px 0 0 #fff, inset 0 -1.5px 0 #fff;"></div>
<div class="r" style="left:1208px;top:769px;width:27px;height:102px;box-sizing:border-box;border-left:1.5px solid #e0e0e0;background:#f0f0f0;"></div>
<svg class="r" style="left:1215px;top:778.8px" width="16" height="10"><path d="M1.5 9 L8 1.5 L14.5 9 Q8 7 1.5 9 Z" fill="#111"/></svg>
<svg class="r" style="left:1215px;top:853.5px" width="16" height="10"><path d="M1.5 1 Q8 3 14.5 1 L8 8.5 Z" fill="#111"/></svg>
<div class="r" style="left:1209px;top:799.5px;width:25px;height:26px;box-sizing:border-box;border:1.5px solid #8e8e8e;border-radius:3px;background:linear-gradient(90deg,#f4f4f4 0%,#ececec 45%,#d0d0d0 80%,#e0e0e0 100%);box-shadow:inset 0 0 0 1px #fff;"></div>
<div class="r" style="left:51.3px;top:782.9px;width:2.6px;height:2.6px;background:#3a3a4c;border-radius:50%;"></div>
<div class="t" style="left:61.00px;top:770.57px;font-size:19.980px;line-height:24px;color:#000;letter-spacing:1.2px;transform:scaleX(0.8283);transform-origin:left;">Check for sudden speed reduction.</div>
<div class="r" style="left:51.3px;top:806.63px;width:2.6px;height:2.6px;background:#3a3a4c;border-radius:50%;"></div>
<div class="t" style="left:61.00px;top:794.30px;font-size:19.980px;line-height:24px;color:#000;letter-spacing:1.2px;transform:scaleX(0.8217);transform-origin:left;">Check for output short-circuit.</div>
<div class="r" style="left:51.3px;top:830.36px;width:2.6px;height:2.6px;background:#3a3a4c;border-radius:50%;"></div>
<div class="t" style="left:61.00px;top:818.03px;font-size:19.980px;line-height:24px;color:#000;letter-spacing:1.2px;transform:scaleX(0.8151);transform-origin:left;">Check for too fast operation of the motor's mechanical brake.</div>
<div class="r" style="left:51.3px;top:854.09px;width:2.6px;height:2.6px;background:#3a3a4c;border-radius:50%;"></div>
<div class="t" style="left:61.00px;top:841.76px;font-size:19.980px;line-height:24px;color:#000;letter-spacing:1.2px;transform:scaleX(0.8079);transform-origin:left;">Check if the stall prevention operation level is set too high. Check if the fast-response current limit operation is disabled.</div>
<div class="t" style="left:38.50px;top:890.67px;font-size:19.980px;line-height:24px;color:#000;letter-spacing:1.2px;transform:scaleX(0.8289);transform-origin:left;">Corrective action</div>
<div class="r" style="left:39px;top:919px;width:1200px;height:108px;box-sizing:border-box;border-top:1.8px solid #a4a4a4;border-left:1px solid #d4d4d4;border-right:1px solid #d8dce4;border-bottom:1px solid #e4e8ee;border-radius:3px;background:#f0f0f0;box-shadow:inset 1px 0 0 #fff, inset -1px 0 0 #fff, inset 0 -1.5px 0 #fff;"></div>
<div class="r" style="left:1208px;top:922px;width:27px;height:102px;box-sizing:border-box;border-left:1.5px solid #e0e0e0;background:#f0f0f0;"></div>
<svg class="r" style="left:1215px;top:931.8px" width="16" height="10"><path d="M1.5 9 L8 1.5 L14.5 9 Q8 7 1.5 9 Z" fill="#111"/></svg>
<svg class="r" style="left:1215px;top:1006px" width="16" height="10"><path d="M1.5 1 Q8 3 14.5 1 L8 8.5 Z" fill="#111"/></svg>
<div class="r" style="left:1209px;top:952.5px;width:25px;height:26px;box-sizing:border-box;border:1.5px solid #8e8e8e;border-radius:3px;background:linear-gradient(90deg,#f4f4f4 0%,#ececec 45%,#d0d0d0 80%,#e0e0e0 100%);box-shadow:inset 0 0 0 1px #fff;"></div>
<div class="r" style="left:51.3px;top:936px;width:2.6px;height:2.6px;background:#3a3a4c;border-radius:50%;"></div>
<div class="t" style="left:61.00px;top:923.67px;font-size:19.980px;line-height:24px;color:#000;letter-spacing:1.2px;transform:scaleX(0.7985);transform-origin:left;">Set the deceleration time longer.</div>
<div class="r" style="left:51.3px;top:959.73px;width:2.6px;height:2.6px;background:#3a3a4c;border-radius:50%;"></div>
<div class="t" style="left:61.00px;top:947.40px;font-size:19.980px;line-height:24px;color:#000;letter-spacing:1.2px;transform:scaleX(0.8191);transform-origin:left;">Check the wiring to make sure that output short circuit does not occur.</div>
<div class="r" style="left:51.3px;top:983.46px;width:2.6px;height:2.6px;background:#3a3a4c;border-radius:50%;"></div>
<div class="t" style="left:61.00px;top:971.13px;font-size:19.980px;line-height:24px;color:#000;letter-spacing:1.2px;transform:scaleX(0.8098);transform-origin:left;">Check the mechanical brake operation.</div>
<div class="r" style="left:51.3px;top:1007.19px;width:2.6px;height:2.6px;background:#3a3a4c;border-radius:50%;"></div>
<div class="t" style="left:61.00px;top:994.86px;font-size:19.980px;line-height:24px;color:#000;letter-spacing:1.2px;transform:scaleX(0.8156);transform-origin:left;">Lower the stall prevention operation level. Activate the fast-response current limit operation.</div>
</body></html>
